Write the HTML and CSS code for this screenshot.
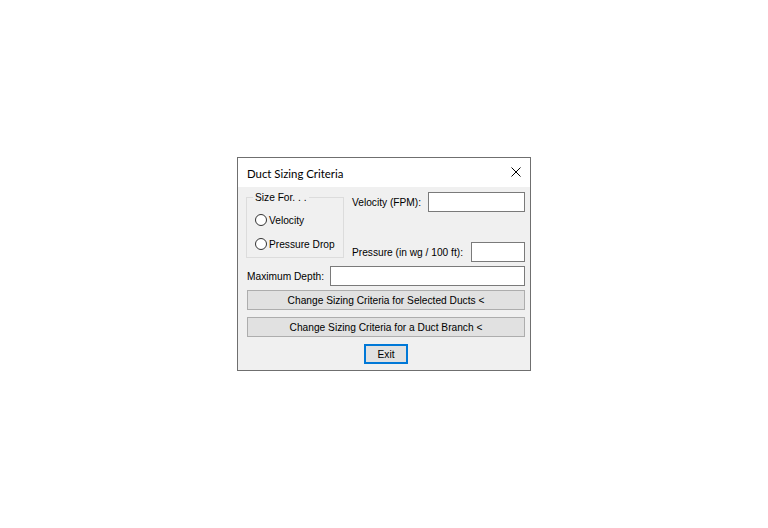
FILE: index.html
```html
<!DOCTYPE html>
<html>
<head>
<meta charset="utf-8">
<link rel="stylesheet" href="styles.css">
</head>
<body>
<div class="window">
  <div class="titlebar">
    <span class="title">Duct Sizing Criteria</span>
    <svg class="close" width="10" height="10" viewBox="0 0 10 10"><path d="M0.5 0.5 L9.5 9.5 M9.5 0.5 L0.5 9.5" stroke="#000" stroke-width="1"/></svg>
  </div>
  <div class="client">
    <div class="top">
      <fieldset class="group">
        <legend>Size For. . .</legend>
        <div class="radios">
          <label class="radio"><span class="dot"></span>Velocity</label>
          <label class="radio"><span class="dot"></span>Pressure Drop</label>
        </div>
      </fieldset>
      <div class="fields">
        <div class="field"><span>Velocity (FPM):</span><span class="input w-vel"></span></div>
        <div class="field press"><span>Pressure (in wg / 100 ft):</span><span class="input w-press"></span></div>
      </div>
    </div>
    <div class="field depth"><span>Maximum Depth:</span><span class="input w-depth"></span></div>
    <div class="btn first">Change Sizing Criteria for Selected Ducts &lt;</div>
    <div class="btn second">Change Sizing Criteria for a Duct Branch &lt;</div>
    <div class="exit-row"><div class="btn exit">Exit</div></div>
  </div>
</div>
</body>
</html>
```

FILE: styles.css
```css
html, body {
  margin: 0;
  background: #ffffff;
}
body {
  padding: 157px 0 0 237px;
  font-family: "Liberation Sans", Arial, sans-serif;
  font-size: 10.2px;
  color: #000;
}
.window {
  box-sizing: border-box;
  width: 294px;
  height: 214px;
  border: 1px solid #6f6f6f;
  display: flex;
  flex-direction: column;
  background: #f0f0f0;
}
.titlebar {
  height: 29px;
  flex: none;
  background: #ffffff;
  display: flex;
  align-items: center;
  padding-left: 9px;
  padding-right: 9px;
}
.title {
  font-family: "Segoe UI", Lato, "Liberation Sans", sans-serif;
  font-size: 11.4px;
  flex: 1;
  margin-top: 1px;
}
.close {
  display: block;
  margin-top: -1px;
}
.client {
  flex: 1;
  padding: 4px 5px 0 9px;
  display: flex;
  flex-direction: column;
}
.top {
  display: flex;
  height: 71px;
}
.group {
  box-sizing: border-box;
  margin: 0 0 0 -1px;
  padding: 0 6px;
  width: 98px;
  height: 67px;
  border: 1px solid #dcdcdc;
  min-width: 0;
}
.group legend {
  padding: 0 2px;
  line-height: 13px;
  font-size: 10.2px;
}
.radios {
  padding-top: 4px;
}
.radio {
  display: flex;
  align-items: center;
  height: 24px;
  padding-left: 2px;
  white-space: nowrap;
}
.dot {
  box-sizing: border-box;
  width: 12px;
  height: 12px;
  border: 1px solid #333;
  border-radius: 50%;
  background: #fff;
  margin-right: 2px;
  flex: none;
}
.fields {
  flex: 1;
  margin-left: 8px;
  padding-top: 1px;
}
.field {
  display: flex;
  align-items: center;
  height: 20px;
  white-space: nowrap;
}
.field.press {
  margin-top: 30px;
}
.field.depth {
  margin-top: 4px;
}
.input {
  box-sizing: border-box;
  height: 20px;
  margin-left: auto;
  background: #fff;
  border: 1px solid #7a7a7a;
}
.w-vel { width: 97px; }
.w-press { width: 54px; }
.w-depth { width: 195px; }
.btn {
  box-sizing: border-box;
  height: 20px;
  background: #e1e1e1;
  border: 1px solid #adadad;
  display: flex;
  align-items: center;
  justify-content: center;
  white-space: nowrap;
}
.btn.first { margin-top: 4px; }
.btn.second { margin-top: 7px; }
.exit-row {
  margin-top: 7px;
  display: flex;
  justify-content: center;
}
.btn.exit {
  width: 44px;
  border: 1px solid #0078d7;
  box-shadow: inset 0 0 0 1px #0078d7;
}
```
